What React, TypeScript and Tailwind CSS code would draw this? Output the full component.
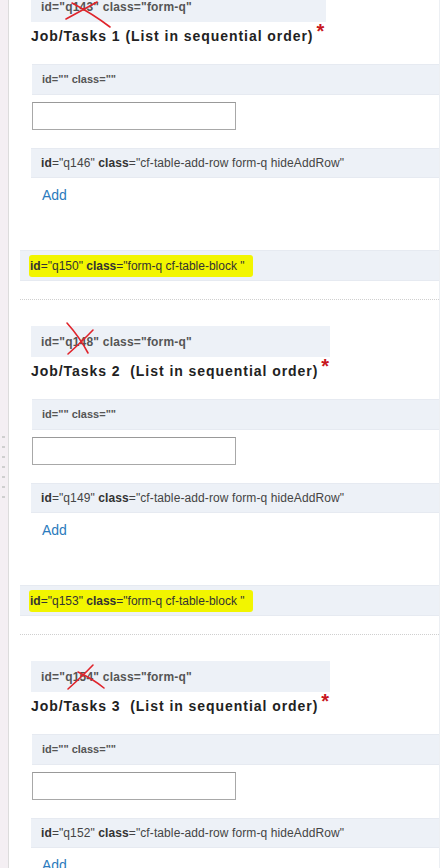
import React from "react";

type Section = {
  labelId: string;
  title: string;
  rowId: string;
  blockId: string;
  labelW: string;
  strokes: [number, number, number, number][];
};

const sections: Section[] = [
  {
    labelId: "q143",
    title: "Job/Tasks 1 (List in sequential order)",
    rowId: "q146",
    blockId: "q150",
    labelW: "w-[295px]",
    strokes: [
      [35, 28, 66, 11],
      [41, 12, 79, 36],
    ],
  },
  {
    labelId: "q148",
    title: "Job/Tasks 2\u00a0 (List in sequential order)",
    rowId: "q149",
    blockId: "q153",
    labelW: "w-[299px]",
    strokes: [
      [36, -3, 57, 27],
      [62, 4, 37, 28],
    ],
  },
  {
    labelId: "q154",
    title: "Job/Tasks 3\u00a0 (List in sequential order)",
    rowId: "q152",
    blockId: "q156",
    labelW: "w-[299px]",
    strokes: [
      [37, 28, 62, 4],
      [47, 11, 73, 27],
    ],
  },
];

function Block({ s, first }: { s: Section; first: boolean }) {
  return (
    <div className={first ? "mt-[-9px]" : ""}>
      <div className="pl-[11px]">
        {/* label box */}
        <div
          className={`relative flex h-[31px] ${s.labelW} items-center bg-[#edf1f7] pl-[10px] text-[12px] font-bold tracking-[0.2px] text-[#555]`}
        >
          id="{s.labelId}" class="form-q"
          <svg
            className="pointer-events-none absolute left-0 top-0 overflow-visible"
            width="100"
            height="31"
          >
            {s.strokes.map((l, i) => (
              <path
                key={i}
                d={`M${l[0]} ${l[1]} Q${(l[0] + l[2]) / 2 + 2} ${(l[1] + l[3]) / 2 - 1} ${l[2]} ${l[3]}`}
                stroke="#e0242b"
                strokeWidth="1.6"
                fill="none"
                strokeLinecap="round"
              />
            ))}
          </svg>
        </div>

        {/* title */}
        <div className="mb-[20px] flex pt-[6px] text-[14px] font-bold leading-[16px] tracking-[0.95px] text-[#222]">
          <span>{s.title}</span>
          <span className="ml-[3px] mt-[-7px] text-[20px] leading-[20px] text-[#c8161d]">*</span>
        </div>

        {/* sub box */}
        <div className="ml-[1px] flex h-[31px] items-center border-y border-[#e6eaf1] bg-[#edf1f7] pl-[10px] text-[11px] font-bold text-[#555]">
          id="" class=""
        </div>

        <div className="ml-[1px] mt-[7px] h-[28px] w-[204px] border border-[#a8a8a8] border-t-[#999] bg-white" />

        {/* add row box */}
        <div className="mt-[18px] flex h-[30px] items-center border-y border-[#e6eaf1] bg-[#edf1f7] pl-[10px] text-[12px] tracking-[0.1px] text-[#444]">
          <b className="text-[#333]">id</b>="{s.rowId}"&nbsp;<b className="text-[#333]">class</b>="cf-table-add-row form-q hideAddRow"
        </div>

        <div className="pl-[11px] pt-[9px] text-[14px] leading-[17px] text-[#2b7bbd]">Add</div>
      </div>

      {/* block box */}
      <div className="mt-[46px] flex h-[31px] items-center border-y border-[#e6eaf1] bg-[#edf1f7] pl-[9px] text-[12px] text-[#333]">
        <span className="rounded-[3px] bg-[#f2f500] py-[2px] pr-[8px] pl-[1px]">
          <b>id</b>="{s.blockId}" <b>class</b>="form-q cf-table-block "
        </span>
      </div>

      <div className="mt-[18px] mb-[26px] border-t border-dotted border-[#cfcfcf]" />
    </div>
  );
}

export default function App() {
  return (
    <div
      className="flex h-[868px] w-[440px] overflow-hidden bg-white"
      style={{ fontFamily: '"Liberation Sans", Arial, sans-serif' }}
    >
      {/* splitter strip */}
      <div className="flex w-[9px] shrink-0 flex-col border-r border-[#dcdcdc] bg-[#f4eff3] pt-[436px] pl-[2px]">
        {[0, 1, 2, 3, 4, 5, 6].map((i) => (
          <div key={i} className="mb-[8px] h-[2px] w-[3px] bg-[#cfcfcf]" />
        ))}
      </div>

      <div className="min-w-0 flex-1 border-r border-[#eceff3] pl-[11px]">
        {sections.map((s, i) => (
          <Block key={s.labelId} s={s} first={i === 0} />
        ))}
      </div>
    </div>
  );
}
